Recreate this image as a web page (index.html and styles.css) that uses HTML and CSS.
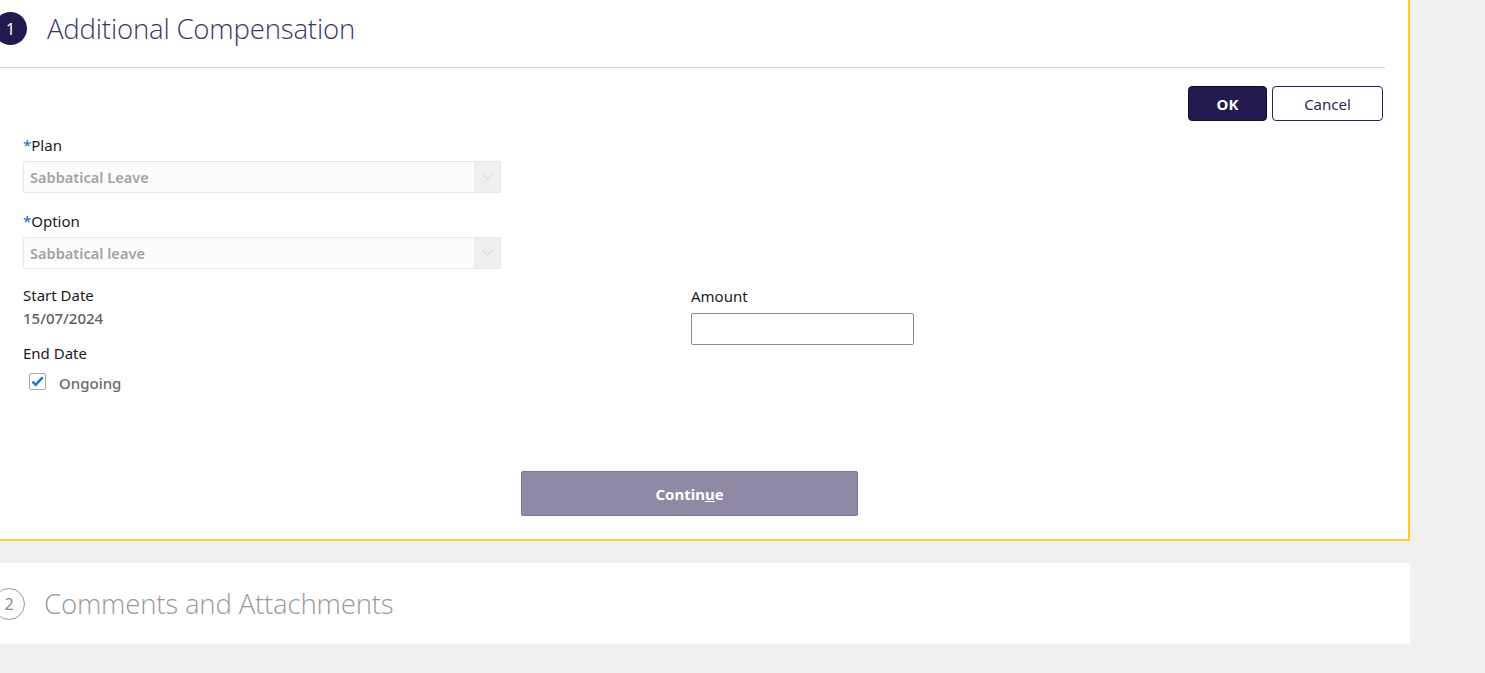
FILE: index.html
```html
<!DOCTYPE html>
<html lang="en">
<head>
<meta charset="utf-8">
<title>Additional Compensation</title>
<link rel="stylesheet" href="styles.css">
</head>
<body>
<div class="page">
  <section class="card active">
    <header class="card-head">
      <span class="step step-on">1</span>
      <h1 class="title">Additional Compensation</h1>
    </header>
    <div class="card-body">
      <div class="actions">
        <button class="btn btn-ok">OK</button>
        <button class="btn btn-cancel">Cancel</button>
      </div>
      <div class="field field-first">
        <div class="label"><span class="req">*</span>Plan</div>
        <div class="select">
          <span class="select-text">Sabbatical Leave</span>
          <span class="select-btn"><svg width="11" height="6" viewBox="0 0 11 6"><path d="M0.5 0.5 L5.5 5 L10.5 0.5" fill="none" stroke="#cfcfcf" stroke-width="1"/></svg></span>
        </div>
      </div>
      <div class="field">
        <div class="label"><span class="req">*</span>Option</div>
        <div class="select">
          <span class="select-text">Sabbatical leave</span>
          <span class="select-btn"><svg width="11" height="6" viewBox="0 0 11 6"><path d="M0.5 0.5 L5.5 5 L10.5 0.5" fill="none" stroke="#cfcfcf" stroke-width="1"/></svg></span>
        </div>
      </div>
      <div class="grid">
        <div class="col">
          <div class="label">Start Date</div>
          <div class="value">15/07/2024</div>
          <div class="label label-end">End Date</div>
          <div class="check-row">
            <span class="checkbox"><svg width="17" height="17" viewBox="0 0 17 17"><rect x="0.5" y="0.5" width="16" height="16" rx="1.5" fill="#fff" stroke="#a8a8a8"/><path d="M3.4 8.6 L6.8 11.8 L13.6 4.4" fill="none" stroke="#1a6fd1" stroke-width="2.4"/></svg></span>
            <span class="check-text">Ongoing</span>
          </div>
        </div>
        <div class="col">
          <div class="label label-amount">Amount</div>
          <div class="input"></div>
        </div>
      </div>
    </div>
    <div class="card-foot">
      <button class="btn btn-continue">Contin<span class="ak">u</span>e</button>
    </div>
  </section>
  <section class="card inactive">
    <span class="step step-off">2</span>
    <h2 class="title title-off">Comments and Attachments</h2>
  </section>
</div>
</body>
</html>
```
FILE: styles.css
```css
html, body {
  margin: 0;
  padding: 0;
}
body {
  background: #f1f1f1;
  font-family: "Noto Sans", "Open Sans", sans-serif;
  font-size: 15px;
  color: #1b1b1b;
  overflow: hidden;
  width: 1485px;
  height: 673px;
}
.page {
  margin-left: -31px;
  width: 1441px;
}
.card {
  background: #fff;
  box-sizing: border-box;
}
.active {
  margin-top: -12px;
  border: 2px solid #fdcc35;
  padding-bottom: 23px;
}
.card-head {
  display: flex;
  align-items: center;
  padding: 22px 0 22px 23px;
  margin-right: 23px;
  border-bottom: 1px solid #d3d3d3;
}
.step {
  width: 33px;
  height: 33px;
  border-radius: 50%;
  box-sizing: border-box;
  display: flex;
  align-items: center;
  justify-content: center;
  font-size: 16px;
  flex: none;
}
.step-on {
  background: #221a4f;
  color: #fff;
}
.title {
  margin: 0 0 0 20px;
  font-family: "Open Sans", "Noto Sans", sans-serif;
  font-weight: 300;
  font-size: 27.6px;
  line-height: 33px;
  color: #3d3669;
  letter-spacing: -0.2px;
}
.card-body {
  padding: 18px 25px 0 52px;
}
.actions {
  display: flex;
  justify-content: flex-end;
  gap: 5px;
}
.btn {
  font-family: "Noto Sans", "Open Sans", sans-serif;
  font-size: 15px;
  box-sizing: border-box;
  cursor: pointer;
}
.btn-ok {
  width: 79px;
  height: 35px;
  background: #221a4f;
  color: #fff;
  font-weight: 700;
  border: 1px solid #120d30;
  border-radius: 4px;
}
.btn-cancel {
  width: 111px;
  height: 35px;
  background: #fff;
  color: #2d2660;
  border: 1px solid #2a2360;
  border-radius: 4px;
}
.field {
  margin-top: 18px;
}
.field-first {
  margin-top: 14px;
}
.label {
  line-height: 20px;
  color: #1b1b1b;
}
.req {
  color: #0f6fc6;
}
.select {
  margin-top: 6px;
  width: 478px;
  height: 32px;
  box-sizing: border-box;
  border: 1px solid #e8e8e8;
  border-radius: 2px;
  background: #fcfcfc;
  display: flex;
  align-items: center;
}
.select-text {
  flex: 1;
  padding-left: 6px;
  color: #a3a3a3;
  font-weight: 600;
  font-size: 14.6px;
}
.select-btn {
  width: 26px;
  height: 30px;
  background: #efefef;
  display: flex;
  align-items: center;
  justify-content: center;
}
.grid {
  display: grid;
  grid-template-columns: 668px 1fr;
  margin-top: 16px;
}
.value {
  margin-top: 3px;
  line-height: 20px;
  color: #5e5e5e;
  font-weight: 500;
}
.label-end {
  margin-top: 15px;
}
.check-row {
  margin-top: 9px;
  display: flex;
  align-items: center;
  height: 18px;
}
.checkbox {
  margin-left: 6px;
  width: 17px;
  height: 17px;
  display: flex;
}
.check-text {
  margin-left: 13px;
  color: #6a6a6a;
  font-weight: 500;
  line-height: 18px;
  padding-top: 4px;
}
.label-amount {
  margin-top: 1px;
}
.input {
  margin-top: 7px;
  width: 223px;
  height: 32px;
  box-sizing: border-box;
  border: 1px solid #7d8c99;
  border-radius: 2px;
  background: #fff;
}
.card-foot {
  display: flex;
  justify-content: center;
  margin-top: 81px;
}
.btn-continue {
  width: 337px;
  height: 45px;
  background: #8f89a6;
  border: 1px solid #7a7590;
  border-radius: 2px;
  color: #fff;
  font-weight: 700;
}
.ak {
  text-decoration: underline;
}
.inactive {
  margin-top: 22px;
  height: 81px;
  display: flex;
  align-items: center;
  padding-left: 24px;
}
.step-off {
  width: 32px;
  height: 32px;
  border: 1px solid #9a9a9a;
  color: #8a8a8a;
}
.title-off {
  margin-left: 19px;
  color: #9a9a9a;
}
```
